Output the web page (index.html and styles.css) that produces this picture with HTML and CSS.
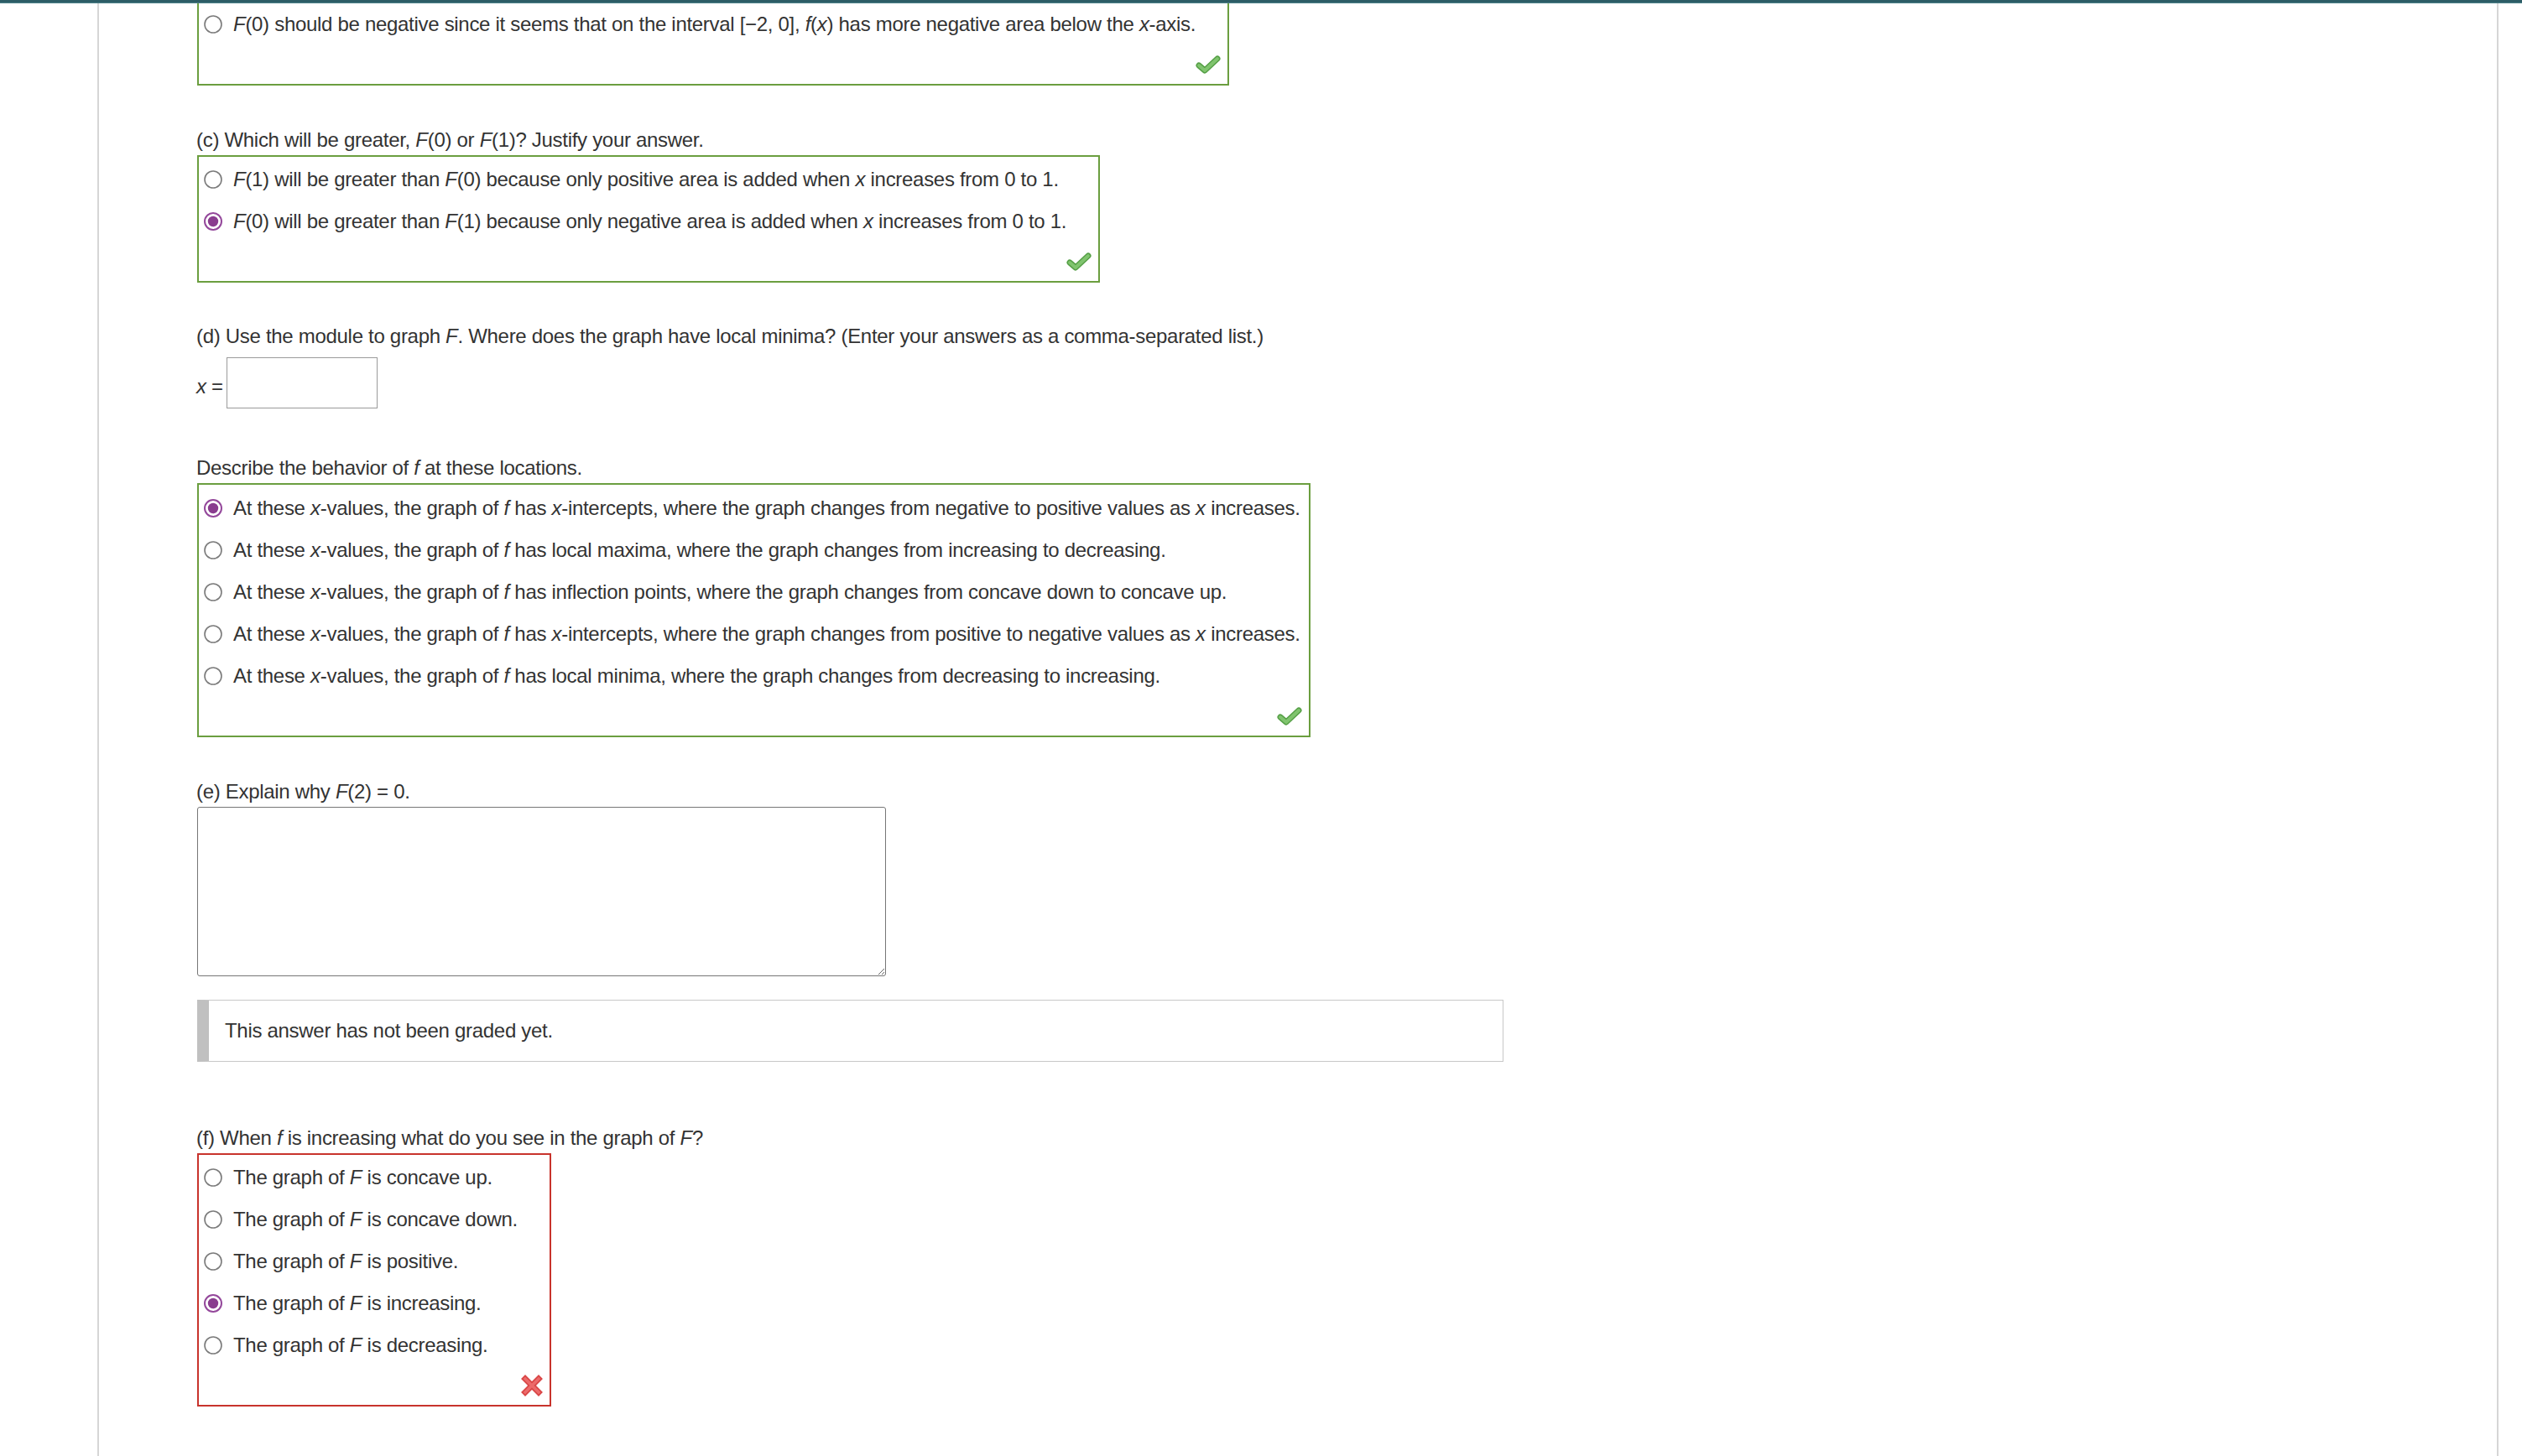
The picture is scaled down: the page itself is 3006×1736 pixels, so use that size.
FILE: index.html
```html
<!DOCTYPE html>
<html lang="en">
<head>
<meta charset="utf-8">
<title>Question</title>
<link rel="stylesheet" href="styles.css">
</head>
<body>
<div class="topbar"></div>
<main class="page">
  <div class="choices choices--green choices--top">
    <div class="opt"><span class="radio"><svg viewBox="0 0 22 22" width="22" height="22"><circle cx="11" cy="11" r="10" class="ring"/></svg></span><span class="opt-text"><i>F</i>(0) should be negative since it seems that on the interval [−2, 0], <i>f</i>(<i>x</i>) has more negative area below the <i>x</i>-axis.</span></div>
    <div class="mark"><svg viewBox="0 0 30 24" width="30" height="24"><path d="M4 13 L11 19 L26 5" class="chk-o"/><path d="M4 13 L11 19 L26 5" class="chk-i"/></svg></div>
  </div>

  <section class="q q--c">
    <p class="prompt">(c) Which will be greater, <i>F</i>(0) or <i>F</i>(1)? Justify your answer.</p>
    <div class="choices choices--green">
      <div class="opt"><span class="radio"><svg viewBox="0 0 22 22" width="22" height="22"><circle cx="11" cy="11" r="10" class="ring"/></svg></span><span class="opt-text"><i>F</i>(1) will be greater than <i>F</i>(0) because only positive area is added when <i>x</i> increases from 0 to 1.</span></div>
      <div class="opt"><span class="radio"><svg viewBox="0 0 22 22" width="22" height="22"><circle cx="11" cy="11" r="10" class="ring ring--on"/><circle cx="11" cy="11" r="6.2" class="dot"/></svg></span><span class="opt-text"><i>F</i>(0) will be greater than <i>F</i>(1) because only negative area is added when <i>x</i> increases from 0 to 1.</span></div>
      <div class="mark"><svg viewBox="0 0 30 24" width="30" height="24"><path d="M4 13 L11 19 L26 5" class="chk-o"/><path d="M4 13 L11 19 L26 5" class="chk-i"/></svg></div>
    </div>
  </section>

  <section class="q q--d">
    <p class="prompt">(d) Use the module to graph <i>F</i>. Where does the graph have local minima? (Enter your answers as a comma-separated list.)</p>
    <div class="field">
      <span class="field-label"><i>x</i> =</span>
      <input class="field-input" type="text" aria-label="x">
    </div>
  </section>

  <section class="q q--desc">
    <p class="prompt">Describe the behavior of <i>f</i> at these locations.</p>
    <div class="choices choices--green choices--tight">
      <div class="opt"><span class="radio"><svg viewBox="0 0 22 22" width="22" height="22"><circle cx="11" cy="11" r="10" class="ring ring--on"/><circle cx="11" cy="11" r="6.2" class="dot"/></svg></span><span class="opt-text">At these <i>x</i>-values, the graph of <i>f</i> has <i>x</i>-intercepts, where the graph changes from negative to positive values as <i>x</i> increases.</span></div>
      <div class="opt"><span class="radio"><svg viewBox="0 0 22 22" width="22" height="22"><circle cx="11" cy="11" r="10" class="ring"/></svg></span><span class="opt-text">At these <i>x</i>-values, the graph of <i>f</i> has local maxima, where the graph changes from increasing to decreasing.</span></div>
      <div class="opt"><span class="radio"><svg viewBox="0 0 22 22" width="22" height="22"><circle cx="11" cy="11" r="10" class="ring"/></svg></span><span class="opt-text">At these <i>x</i>-values, the graph of <i>f</i> has inflection points, where the graph changes from concave down to concave up.</span></div>
      <div class="opt"><span class="radio"><svg viewBox="0 0 22 22" width="22" height="22"><circle cx="11" cy="11" r="10" class="ring"/></svg></span><span class="opt-text">At these <i>x</i>-values, the graph of <i>f</i> has <i>x</i>-intercepts, where the graph changes from positive to negative values as <i>x</i> increases.</span></div>
      <div class="opt"><span class="radio"><svg viewBox="0 0 22 22" width="22" height="22"><circle cx="11" cy="11" r="10" class="ring"/></svg></span><span class="opt-text">At these <i>x</i>-values, the graph of <i>f</i> has local minima, where the graph changes from decreasing to increasing.</span></div>
      <div class="mark"><svg viewBox="0 0 30 24" width="30" height="24"><path d="M4 13 L11 19 L26 5" class="chk-o"/><path d="M4 13 L11 19 L26 5" class="chk-i"/></svg></div>
    </div>
  </section>

  <section class="q q--e">
    <p class="prompt">(e) Explain why <i>F</i>(2) = 0.</p>
    <textarea class="answer-area" aria-label="Explanation"></textarea>
    <div class="notice">This answer has not been graded yet.</div>
  </section>

  <section class="q q--f">
    <p class="prompt">(f) When <i>f</i> is increasing what do you see in the graph of <i>F</i>?</p>
    <div class="choices choices--red">
      <div class="opt"><span class="radio"><svg viewBox="0 0 22 22" width="22" height="22"><circle cx="11" cy="11" r="10" class="ring"/></svg></span><span class="opt-text">The graph of <i>F</i> is concave up.</span></div>
      <div class="opt"><span class="radio"><svg viewBox="0 0 22 22" width="22" height="22"><circle cx="11" cy="11" r="10" class="ring"/></svg></span><span class="opt-text">The graph of <i>F</i> is concave down.</span></div>
      <div class="opt"><span class="radio"><svg viewBox="0 0 22 22" width="22" height="22"><circle cx="11" cy="11" r="10" class="ring"/></svg></span><span class="opt-text">The graph of <i>F</i> is positive.</span></div>
      <div class="opt"><span class="radio"><svg viewBox="0 0 22 22" width="22" height="22"><circle cx="11" cy="11" r="10" class="ring ring--on"/><circle cx="11" cy="11" r="6.2" class="dot"/></svg></span><span class="opt-text">The graph of <i>F</i> is increasing.</span></div>
      <div class="opt"><span class="radio"><svg viewBox="0 0 22 22" width="22" height="22"><circle cx="11" cy="11" r="10" class="ring"/></svg></span><span class="opt-text">The graph of <i>F</i> is decreasing.</span></div>
      <div class="mark"><svg viewBox="0 0 26 26" width="26" height="26"><path d="M5 5 L21 21 M21 5 L5 21" class="x-o"/><path d="M5 5 L21 21 M21 5 L5 21" class="x-i"/></svg></div>
    </div>
  </section>
</main>
</body>
</html>
```

FILE: styles.css
```css
html, body {
  margin: 0;
  padding: 0;
  background: #ffffff;
}

body {
  font-family: "Liberation Sans", Arial, Helvetica, sans-serif;
  font-size: 24px;
  line-height: 36px;
  letter-spacing: -0.3px;
  color: #333333;
  overflow: hidden;
}

.topbar {
  height: 3px;
  background: #2d5d66;
  border-bottom: 1px solid #4f838b;
}

.page {
  box-sizing: border-box;
  margin-left: 116px;
  width: 2862px;
  min-height: 1732px;
  border-left: 2px solid #d6d6d6;
  border-right: 2px solid #d6d6d6;
  padding-left: 116px;
}

i {
  font-style: italic;
}

.prompt {
  margin: 0;
  white-space: nowrap;
}

/* answer choice boxes */
.choices {
  box-sizing: border-box;
  width: fit-content;
  border: 2px solid #6b9e3f;
  padding: 2px 8px 0 6px;
  margin-left: 1px;
}

.choices--green {
  border-color: #6b9e3f;
}

.choices--red {
  border-color: #c8332c;
}

.choices--top {
  border-top: none;
  padding-top: 0;
}

.opt {
  display: flex;
  align-items: center;
  height: 50px;
  padding-right: 30px;
  white-space: nowrap;
}

.choices--tight {
  padding-top: 3px;
}

.choices--tight .opt {
  padding-right: 2px;
}

.radio {
  display: flex;
  flex: 0 0 22px;
  width: 22px;
  height: 22px;
  margin-right: 13px;
}

.ring {
  fill: #ffffff;
  stroke: #7b7b7b;
  stroke-width: 1.6;
}

.ring--on {
  stroke: #94489b;
  stroke-width: 2;
}

.dot {
  fill: #8a3d8f;
}

.mark {
  display: flex;
  justify-content: flex-end;
  align-items: center;
  height: 46px;
}

.chk-o {
  fill: none;
  stroke: #559f46;
  stroke-width: 7;
  stroke-linecap: round;
  stroke-linejoin: round;
}

.chk-i {
  fill: none;
  stroke: #80c46e;
  stroke-width: 4;
  stroke-linecap: round;
  stroke-linejoin: round;
}

.x-o {
  fill: none;
  stroke: #d94545;
  stroke-width: 7;
  stroke-linecap: square;
}

.x-i {
  fill: none;
  stroke: #ec6a6a;
  stroke-width: 3.5;
  stroke-linecap: square;
}

/* section spacing */
.q--c {
  margin-top: 47px;
}

.q--d {
  margin-top: 46px;
}

.q--desc {
  margin-top: 53px;
}

.q--e {
  margin-top: 47px;
}

.q--f {
  margin-top: 73px;
}

/* numeric field */
.field {
  display: flex;
  align-items: flex-end;
  margin-top: 7px;
}

.field-label {
  margin-right: 4px;
  margin-bottom: 8px;
  line-height: 36px;
}

.field-input {
  box-sizing: border-box;
  width: 180px;
  height: 61px;
  margin: 0;
  border: 1px solid #9a9a9a;
  border-radius: 0;
  font: inherit;
  padding: 0 8px;
  background: #ffffff;
}

/* essay */
.answer-area {
  display: block;
  box-sizing: border-box;
  width: 821px;
  height: 202px;
  margin: 0 0 0 1px;
  border: 1px solid #767676;
  border-radius: 3px;
  font: inherit;
  padding: 4px;
  resize: both;
}

.notice {
  box-sizing: border-box;
  width: 1557px;
  margin: 28px 0 0 1px;
  border: 1px solid #c8c8c8;
  border-left: 14px solid #c0c0c0;
  padding: 18px 20px 18px 19px;
  white-space: nowrap;
}
```
